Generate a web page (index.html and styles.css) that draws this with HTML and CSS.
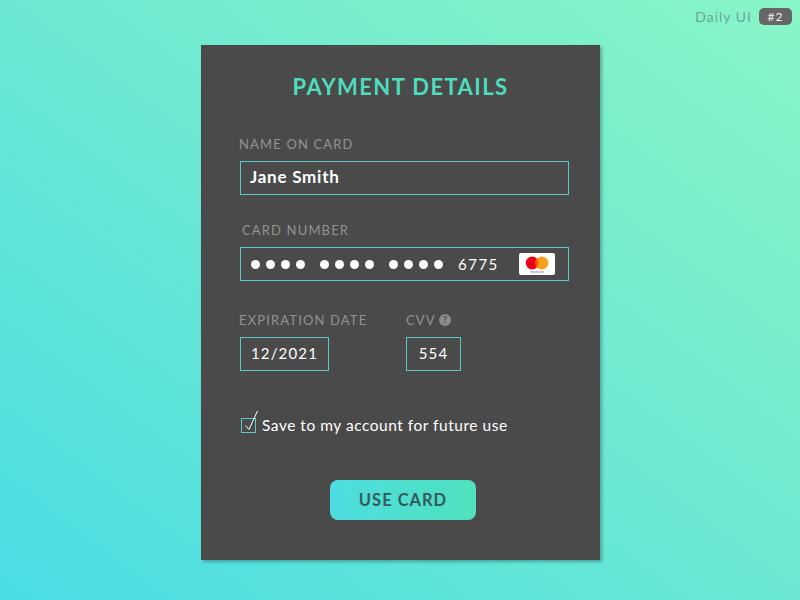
FILE: index.html
```html
<!DOCTYPE html>
<html lang="en">
<head>
<meta charset="utf-8">
<title>Payment details</title>
<link rel="stylesheet" href="styles.css">
</head>
<body>
<div class="tag"><span class="tag-name">Daily UI</span><span class="tag-num">#2</span></div>
<main class="card">
  <h1 class="title">PAYMENT DETAILS</h1>
  <div class="label label-name">NAME ON CARD</div>
  <div class="field field-wide field-name">Jane Smith</div>
  <div class="label label-number">CARD NUMBER</div>
  <div class="field field-wide field-number">
    <span class="dots"><i></i><i></i><i></i><i></i></span>
    <span class="dots"><i></i><i></i><i></i><i></i></span>
    <span class="dots"><i></i><i></i><i></i><i></i></span>
    <span class="last">6775</span>
    <svg class="brand" viewBox="0 0 36 22" width="36" height="22">
      <rect width="36" height="22" rx="2" fill="#fff"/>
      <circle cx="13.2" cy="10" r="6.5" fill="#eb001b"/>
      <circle cx="22.8" cy="10" r="6.5" fill="#f79e1b"/>
      <path d="M18 5.6a6.5 6.5 0 0 1 0 8.8a6.5 6.5 0 0 1 0-8.8z" fill="#ff5f00"/>
      <text x="18" y="19.6" text-anchor="middle" class="brand-text">mastercard</text>
    </svg>
  </div>
  <div class="pair">
    <div class="col col-date">
      <div class="label label-date">EXPIRATION DATE</div>
      <div class="field field-small field-date">12/2021</div>
    </div>
    <div class="col">
      <div class="label label-cvv">CVV<span class="help">?</span></div>
      <div class="field field-small field-cvv">554</div>
    </div>
  </div>
  <div class="save">
    <span class="box">
      <svg class="check" viewBox="0 0 16 24" width="16" height="24"><path d="M3.5 15.5L7 19.5L15.5 1" fill="none" stroke="#fff" stroke-width="1"/></svg>
    </span>
    <span class="save-text">Save to my account for future use</span>
  </div>
  <div class="actions"><button class="btn">USE CARD</button></div>
</main>
</body>
</html>
```
FILE: styles.css
```css
* { box-sizing: border-box; }
html, body { height: 100%; }
body {
  margin: 0;
  width: 800px;
  height: 600px;
  overflow: hidden;
  padding-top: 45px;
  font-family: "Lato", "Liberation Sans", sans-serif;
  background: linear-gradient(to top right, #49dde4 0%, #6ce8d2 50%, #88f5c6 100%);
}
.tag {
  position: absolute;
  top: 8px;
  right: 8px;
  display: flex;
  align-items: center;
  gap: 7px;
}
.tag-name { font-size: 14px; letter-spacing: 1px; color: #6fa69a; }
.tag-num {
  background: #666;
  color: #eee;
  font-size: 12px;
  letter-spacing: 1px;
  width: 33px;
  height: 17px;
  line-height: 17px;
  text-align: center;
  border-radius: 5px;
}
.card {
  width: 399px;
  height: 515px;
  margin-left: 201px;
  background: #4a4a4a;
  padding: 29px 0 0 38px;
  box-shadow: 2px 2px 3px rgba(40, 90, 90, 0.45);
}
.title {
  margin: 0 0 0 -38px;
  width: 399px;
  font-size: 22px;
  line-height: 26px;
  font-weight: 700;
  letter-spacing: 1.4px;
  text-align: center;
  color: #4edcbe;
}
.label {
  font-size: 13px;
  line-height: 16px;
  letter-spacing: 1.15px;
  color: #929292;
  white-space: nowrap;
}
.label-name { margin-top: 36px; }
.label-number { margin-top: 27px; margin-left: 3px; }
.field {
  margin-left: 1px;
  margin-top: 9px;
  height: 34px;
  border: 1px solid #5cc8c8;
  color: #fff;
  display: flex;
  align-items: center;
  white-space: nowrap;
}
.field-wide { width: 329px; }
.field-name { padding: 0 0 4px 9px; font-size: 17px; font-weight: 700; letter-spacing: 0.75px; }
.field-number { padding-left: 10px; }
.dots { display: flex; gap: 6px; margin-right: 15px; }
.dots i { width: 9px; height: 9px; border-radius: 50%; background: #fff; }
.last { font-size: 15px; letter-spacing: 1.5px; }
.brand { margin-left: 20px; }
.brand-text { font: 2.6px "Liberation Sans", sans-serif; fill: #666; }
.pair { display: flex; margin-top: 31px; }
.col-date { width: 167px; }
.label-cvv { display: flex; align-items: center; gap: 3px; }
.help {
  width: 12px;
  height: 12px;
  border-radius: 50%;
  background: #8c8c8c;
  color: #4a4a4a;
  font-size: 9px;
  line-height: 12px;
  font-weight: 700;
  letter-spacing: 0;
  text-align: center;
}
.field-small { justify-content: center; padding-bottom: 2px; font-size: 15px; letter-spacing: 1.15px; }
.field-date { width: 89px; }
.field-cvv { width: 55px; margin-left: 0; }
.save { display: flex; align-items: center; margin-top: 46px; margin-left: 2px; height: 16px; }
.box {
  position: relative;
  width: 15px;
  height: 15px;
  border: 1px solid #5cc8c8;
  margin-right: 6px;
  flex: none;
}
.check { position: absolute; left: 0; top: -9px; }
.save-text { font-size: 15.5px; letter-spacing: 0.52px; color: #fff; white-space: nowrap; }
.actions { margin-top: 47px; margin-left: 91px; }
.btn {
  display: block;
  width: 146px;
  height: 40px;
  border: 0;
  border-radius: 8px;
  background: linear-gradient(100deg, #4ddde2, #4fe2bb);
  color: #37595c;
  font: 700 16.5px "Lato", "Liberation Sans", sans-serif;
  letter-spacing: 1px;
}
```
